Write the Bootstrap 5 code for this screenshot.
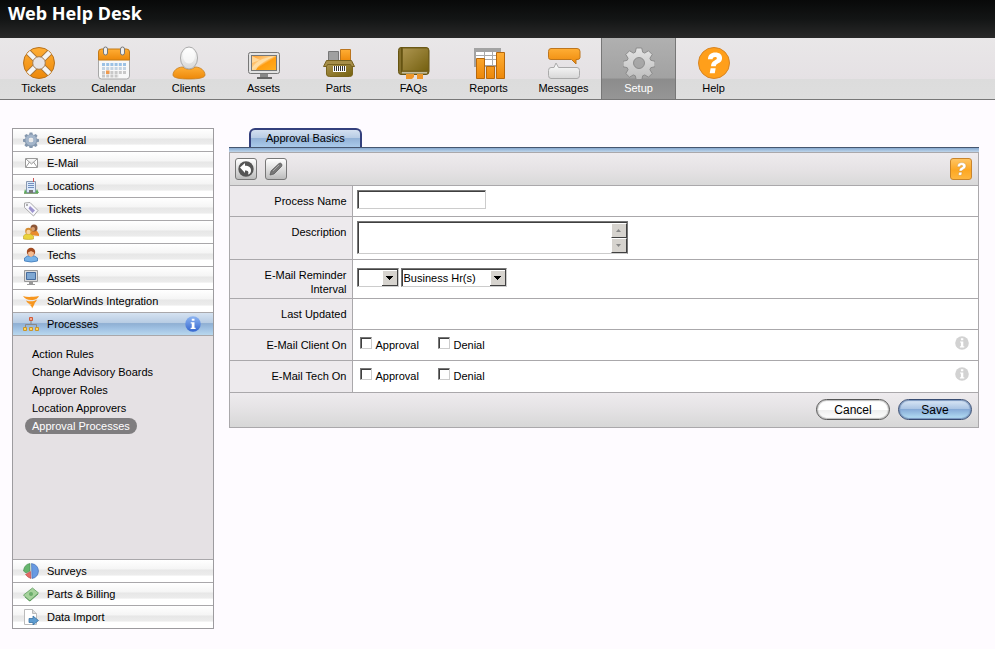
<!DOCTYPE html>
<html lang="en">
<head>
<meta charset="utf-8">
<meta name="viewport" content="width=device-width, initial-scale=1">
<title>Web Help Desk</title>
<link href="https://cdn.jsdelivr.net/npm/bootstrap@5.3.0/dist/css/bootstrap.min.css" rel="stylesheet">
<style>
body{font:11px/14px "Liberation Sans",Arial,sans-serif;color:#000;background:#fefbff}
a{color:inherit;text-decoration:none}
.masthead{height:38px;padding:0 8px;background:linear-gradient(#080909,#131515 50%,#292929)}
.masthead h1{font:bold 18px/27px "Noto Sans","Open Sans",sans-serif;color:#fff}
.topnav{height:62px;padding-left:1px;border-bottom:1px solid #777;background:linear-gradient(#e9e7e8,#e5e1e4 68%,#dcdcdc 68%,#dedede)}
.topnav a{width:75px;height:61px;padding-top:8px;line-height:16px}
.topnav svg{width:34px;height:34px}
.topnav a.active{color:#fff;background:linear-gradient(#b0b0b0,#a2a2a2 65%,#8c8c8c 68%,#969696);border:solid #777;border-width:0 1px}
.page-body{padding:28px 16px 20px 12px;gap:15px}
.sidebar{width:202px;border:1px solid #9d9b9f}
.menu-row{height:23px;padding-left:10px;padding-right:12px;gap:8px;border-bottom:1px solid #a9a7aa;background:linear-gradient(#fff,#f5f5f5 40%,#e7e7e7 46%,#ececec 68%,#fff 74%,#fff)}
.menu-row svg{width:16px;height:16px}
.menu-row.active{background:linear-gradient(#d5e2f1,#b8cce3 44%,#8fafd3 48%,#9fc0e2 70%,#b9d8ee)}
.menu-row.final{border-bottom:0;height:22px}
.submenu{min-height:224px;padding:9px 12px;background:#e5e1e4;border-bottom:1px solid #a9a7aa}
.submenu a{height:18px;line-height:18px;padding:0 7px}
.submenu a.active{height:16px;line-height:16px;margin-top:1px;border-radius:8px;background:#7f7d7f;color:#fff}
.tab-strip{padding-left:20px;border-bottom:1px solid #46566f}
.tab-strip a{padding:0 15px 1px;line-height:16px;border:solid #34407d;border-width:2px 2px 0;border-radius:6px 6px 0 0;background:linear-gradient(#d3e0f0,#b7cbe4 48%,#93b2d7 50%,#aacaea)}
.blue-line{height:4px;background:linear-gradient(#87a9d0,#c0d6ea)}
.panel{border:1px solid #aaa8ab;background:#fff}
.panel-tools{height:32px;padding:0 6px 0 5px;gap:8px;background:linear-gradient(#eeebee,#e5e2e4 55%,#d9d9d9)}
.tool-btn{width:22px;height:22px;border:1px solid #777;border-radius:3px;background:linear-gradient(#fff,#d8d8d8 60%,#bbb)}
.help-btn{border-color:#c9852c;background:linear-gradient(#ffc564,#fda722 55%,#ffb63e)}
.form-grid th,.form-grid td{border-top:1px solid #aaa8ab;vertical-align:top}
.form-grid th{width:122px;padding:8px 5px 2px 24px;font-weight:400;text-align:right;background:#edeaed;border-right:1px solid #aaa8ab}
.form-grid td{padding:4px}
.form-grid tr{height:31px}
.form-grid tr.tall{height:43px}
.form-grid tr.medium{height:39px}
.form-grid .medium td{padding-top:8px}
.form-grid td.choices{padding:6px 9px 6px 7px}
.sunken{border:1px solid;border-color:#777 #ccc #ccc #777;box-shadow:inset 1px 1px #404040;border-radius:0;background-color:#fff}
.name-box{width:129px;height:19px;padding:2px;outline:0}
.memo{width:271px;height:33px;padding:1px 0 0 2px;border-color:#777 #777 #ccc}
.memo textarea{border:0;outline:0;resize:none;background:transparent;overflow:hidden;min-width:0}
.memo button{width:16px;height:15px;padding:0;border:1px solid;border-color:#fff #404040 #404040 #fff;background:#d6d3ce}
.drops{gap:2px}
.drop{appearance:none;height:19px;padding:0 20px 0 2px;color:#000;background:#fff url("data:image/svg+xml,%3Csvg xmlns='http://www.w3.org/2000/svg' width='16' height='16'%3E%3Cpath fill='%23404040' d='M0 0h16v16H0z'/%3E%3Cpath fill='%23fff' d='M0 0h15v15H0z'/%3E%3Cpath fill='%23d6d3ce' d='M1 1h14v14H1z'/%3E%3Cpath d='M4 6h7v1H10v1H9v1H8v1H7V9H6V8H5V7H4z'/%3E%3C/svg%3E") no-repeat right 0 top 1px}
.drop-count{width:42px}
.drop-unit{width:106px}
.tick{appearance:none;width:12px;height:12px;margin:1px 4px 0 0}
.tick:checked{background:#404040}
.tick-pair{width:78px;line-height:18px}
.info{width:14px;height:14px}
.panel-foot{height:35px;padding:0 6px;gap:8px;border-top:1px solid #aaa8ab;background:linear-gradient(#eeebee,#e4e2e4 50%,#d7d7d7)}
.pill{width:74px;height:21px;padding:0;border:1px solid #555;border-radius:11px;font-size:12px;line-height:18px;background:linear-gradient(#fff,#fff 50%,#eee 52%,#fff);box-shadow:inset 0 0 1px 1px #bbb}
.pill-save{border-color:#394d72;background:linear-gradient(#dbe8f6,#a9c3e3 48%,#87abd7 50%,#b7e2f6);box-shadow:inset 0 0 1px 1px #7894bd}
</style>
<script src="https://cdn.jsdelivr.net/npm/bootstrap@5.3.0/dist/js/bootstrap.bundle.min.js"></script>
</head>
<body>
<svg width="0" height="0" class="d-block" aria-hidden="true">
<defs>
<linearGradient id="or" x2="0" y2="1"><stop stop-color="#ffae35"/><stop offset="1" stop-color="#ed8809"/></linearGradient>
<linearGradient id="gold" x2="1" y2="1"><stop stop-color="#ad9550"/><stop offset="1" stop-color="#74600f"/></linearGradient>
<linearGradient id="wh" x2="0" y2="1"><stop stop-color="#fff"/><stop offset="1" stop-color="#d7d7d7"/></linearGradient>
<linearGradient id="gr" x2="0" y2="1"><stop stop-color="#e4e4e4"/><stop offset="1" stop-color="#bdbdbd"/></linearGradient>
<linearGradient id="bl" x2="0" y2="1"><stop stop-color="#8db5f2"/><stop offset="1" stop-color="#3466cf"/></linearGradient>
<linearGradient id="scr" x2="1" y2="1"><stop stop-color="#ff9a22"/><stop offset=".45" stop-color="#ffd18a"/><stop offset=".55" stop-color="#ff9d10"/><stop offset="1" stop-color="#ffb020"/></linearGradient>
<symbol id="cog" viewBox="0 0 32 32"><path fill-rule="evenodd" d="M13.3 1h5.4l1 4.2 2 .9 3.8-2.3 3.7 3.7-2.3 3.8.9 2 4.2 1v5.4l-4.2 1-.9 2 2.3 3.8-3.7 3.700-3.800-2.300-2 .9-1 4.200h-5.400l-1-4.200-2-.9-3.800 2.300-3.700-3.700 2.300-3.800-.9-2-4.200-1v-5.400l4.200-1 .9-2-2.300-3.800 3.700-3.700 3.800 2.300 2-.9zM16 10.500a5.500 5.500 0 1 0 0 11 5.500 5.500 0 0 0 0-11z"/></symbol>
<symbol id="inf" viewBox="0 0 14 14"><circle cx="7" cy="7" r="6.8"/><path fill="#fff" d="M5.9 2.3h2.4v1.9H5.9zM5 5.4h3.3v4.8h1v1.2H4.9v-1.2h1V6.6H5z"/></symbol>
<symbol id="quest" viewBox="0 0 20 20"><path d="M5.3 7.2C5.500 3.600 7.600 2 11 2c3.300 0 5.200 1.600 5.200 4.100 0 2.300-1.300 3.300-2.900 4.100-1.400.7-1.700 1.200-1.900 2.300H7.700c.1-2.400.9-3.600 2.800-4.500 1.100-.5 1.700-.9 1.700-1.600 0-.6-.5-1-1.400-1-1.100 0-1.700.6-1.900 1.800zM7.400 14h3.900l-.7 3.900H6.700z"/></symbol>
</defs></svg>

<header class="masthead"><h1 class="m-0">Web Help Desk</h1></header>

<nav class="topnav d-flex" aria-label="Main">
<a href="#" class="d-flex flex-column align-items-center"><svg viewBox="0 0 34 34"><circle cx="17" cy="17" r="15.500" fill="url(#or)" stroke="#b9721b"/><g stroke="#a8763a" stroke-width="6.500"><path d="m6.500 6.500 21 21M27.500 6.500l-21 21"/></g><path stroke="#f4f4f4" stroke-width="4.500" d="m6.300 6.300 21.400 21.400M27.700 6.300 6.300 27.700"/><circle cx="17" cy="17" r="6.300" fill="#e6e3e5" stroke="#a37a4a"/></svg>Tickets</a>
<a href="#" class="d-flex flex-column align-items-center"><svg viewBox="0 0 34 34"><rect x="1.500" y="8" width="31" height="25" rx="3" fill="#f8f8f8" stroke="#a7a7a7"/><path fill="url(#or)" stroke="#c27a18" d="M1.500 14V6q0-3 3-3h25q3 0 3 3v8z"/><rect x="6.500" y="1" width="4" height="8" rx="2" fill="#eee" stroke="#777"/><rect x="23.500" y="1" width="4" height="8" rx="2" fill="#eee" stroke="#777"/><g stroke-width="3" stroke-dasharray="3 1.200"><path stroke="#9bc1e5" d="M5 18.500h25"/><path stroke="#c3d3e3" d="M5 22.500h25"/><path stroke="#c8c8c8" d="M5 26.500h25M5 30h17"/></g><path fill="#ef9a4e" d="M9 24.500h3.500V28H9z"/></svg>Calendar</a>
<a href="#" class="d-flex flex-column align-items-center"><svg viewBox="0 0 34 34"><path fill="url(#or)" stroke="#c57d20" stroke-width=".8" d="M1 29c0-4 4-8 10-8 3 3 9 3 12 0 6 0 10 4 10 8 0 3-7 4-16 4S1 32 1 29z"/><ellipse cx="17" cy="12" rx="8.500" ry="11" fill="url(#wh)" stroke="#aaa"/><ellipse cx="17" cy="10" rx="6" ry="7.500" fill="#fff" opacity=".6"/></svg>Clients</a>
<a href="#" class="d-flex flex-column align-items-center"><svg viewBox="0 0 34 34"><rect x="1.500" y="6.500" width="31" height="21" rx="2" fill="#e2e2e2" stroke="#777"/><rect x="4.500" y="9.500" width="25" height="15" fill="url(#scr)" stroke="#777"/><path fill="#ffe2ae" opacity=".75" d="M5 22c5-8 11-10 24-12-11 4-17 8-20 14H5zM5 10l8 4-8 3z"/><path fill="#888" d="M13 28h8v3h-8z"/><path fill="#666" d="M10 31h15v2H10z"/></svg>Assets</a>
<a href="#" class="d-flex flex-column align-items-center"><svg viewBox="0 0 34 34"><path fill="#a0a0a0" stroke="#777" d="M6.500 5.500h10v10h-10z"/><path fill="url(#or)" stroke="#bb751e" d="M18.500 3.500h10v12h-10z"/><path fill="url(#gold)" stroke="#7a651e" d="M4.500 17h26v11q0 2.500-3 2.500h-20q-3 0-3-2.500z"/><path fill="#a68e49" stroke="#766121" d="M4.500 14.500h25l3 6h-3l-1-2h-23l-1 2h-3z"/><path fill="#fff" d="M11 20h13v6H11z"/><path stroke="#333" stroke-dasharray="1 1" stroke-width="5" d="M12 22.500h11"/></svg>Parts</a>
<a href="#" class="d-flex flex-column align-items-center"><svg viewBox="0 0 34 34"><path fill="#84702c" stroke="#665411" d="M4 1.500h25q3 0 3 3v21q0 3-3 3H4q-2.500 0-2.500-3v-21q0-3 2.500-3z"/><path fill="#c4bc9e" d="M5 26h25v1.500H5z"/><path fill="url(#gold)" stroke="#715e1c" d="M5.500 2h24q2 0 2 2v21h-26z"/><path stroke="#665411" d="M4.500 2v24"/><path fill="#ed962a" d="M9 28h4v5H9zm4 0h4v3l-2 2h-2zm7 0h6v5h-6z"/></svg>FAQs</a>
<a href="#" class="d-flex flex-column align-items-center"><svg viewBox="0 0 34 34"><path fill="#fff" stroke="#a3a3a3" stroke-width="2" d="M3 3h25v17H3z"/><path fill="#a3a3a3" d="M2 2h27v4H2z"/><path stroke="#aaa" d="M4 9.500h23M4 13.500h23M12.500 6v14M20.500 6v14"/><g fill="url(#or)" stroke="#b7680c"><path d="M4.500 12.500h8v20h-8zM14.500 20.500h8v12h-8zM24.500 6.500h8v26h-8z"/></g></svg>Reports</a>
<a href="#" class="d-flex flex-column align-items-center"><svg viewBox="0 0 34 34"><path fill="url(#or)" stroke="#bd761e" d="M4 2.500h26q3 0 3 3v6q0 2-3 2h-1v4.500l-4.500-4.500H4q-2.500 0-2.500-2v-6q0-3 2.500-3z"/><path fill="url(#wh)" stroke="#aaa" d="M4 21.500h3l2-4.500 2.500 4.500H30q2.500 0 2.500 3v5q0 3-2.500 3H4q-2.500 0-2.500-3v-5q0-3 2.500-3z"/></svg>Messages</a>
<a href="#" class="active d-flex flex-column align-items-center" aria-current="page"><svg viewBox="0 0 34 34" fill="url(#gr)" stroke="#808080" stroke-width=".8"><use href="#cog" x="1" y="1" width="32" height="32"/></svg>Setup</a>
<a href="#" class="d-flex flex-column align-items-center"><svg viewBox="0 0 34 34"><circle cx="17" cy="17" r="15.500" fill="#ff9f1a" stroke="#d78524"/><use href="#quest" fill="#fff" x="4" y="4" width="26" height="26"/></svg>Help</a>
</nav>

<div class="page-body d-flex align-items-start">
<nav class="sidebar flex-shrink-0" aria-label="Setup">
<a href="#" class="menu-row d-flex align-items-center"><svg><use href="#cog" fill="#8497ad"/><circle cx="8" cy="8" r="4" fill="none" stroke="#a3b5ca" stroke-width="3"/></svg>General</a>
<a href="#" class="menu-row d-flex align-items-center"><svg viewBox="0 0 16 16"><path fill="#fff" stroke="#999" d="M2.500 3.500h12v9h-12zM3 4l5.500 5L14 4M3 12l3.500-5m7.500 5-3.500-5"/></svg>E-Mail</a>
<a href="#" class="menu-row d-flex align-items-center"><svg viewBox="0 0 16 16"><path fill="#dce9fa" stroke="#8898b0" d="M3.500 3.500h9v11h-9z"/><path stroke="#7291c0" d="M5 5.500h6M5 7.500h6M5 9.500h6"/><path fill="#5cab5c" d="m1 15 1-4 2 4zm11 0 2-4 2 4z"/><path fill="#777" d="M6 12h4v3H6z"/><path stroke="#c55" d="M10.500 0v4"/><path stroke="#84a67b" d="M1 15.500h14"/></svg>Locations</a>
<a href="#" class="menu-row d-flex align-items-center"><svg viewBox="0 0 16 16"><path fill="#f8f8fd" stroke="#aaa" d="M1.500 2 7 1.500l8 8L10.500 15l-9-8.500z"/><path fill="#9c93cd" d="m7 5 5 4.500L9.500 12l-4-4.500z"/><circle cx="4" cy="4" r="1" fill="#999"/></svg>Tickets</a>
<a href="#" class="menu-row d-flex align-items-center"><svg viewBox="0 0 16 16"><path fill="#e98b2d" d="M7 11V9l2-2h5l2 3v2z"/><circle cx="11" cy="4" r="3.500" fill="#8c5738"/><circle cx="10" cy="5" r="2" fill="#dba070"/><path fill="#ead33c" stroke="#bca028" stroke-width=".6" d="M.5 15v-3l2-2h5l3 2v3q-5 1-10 0z"/><circle cx="5.500" cy="7" r="3.300" fill="#d58c32"/><circle cx="5.500" cy="8" r="2.200" fill="#f9d39c"/></svg>Clients</a>
<a href="#" class="menu-row d-flex align-items-center"><svg viewBox="0 0 16 16"><path fill="#76b2e9" stroke="#3c76b5" stroke-width=".8" d="M1.500 14v-3l3-2h7l3 2v3q-6 2-13 0z"/><circle cx="8" cy="5" r="4.200" fill="#a34b20"/><path fill="#f4bb91" d="M5 5.500 8 4l3 1.500q0 4-3 4.500-3-.5-3-4.500z"/></svg>Techs</a>
<a href="#" class="menu-row d-flex align-items-center"><svg viewBox="0 0 16 16"><path fill="#ddd" stroke="#999" d="M1.500.5h13v11h-13z"/><path fill="#7fa8d3" stroke="#476c9d" d="M3.500 2.500h9v7h-9z"/><path fill="#999" d="M6 12h4v2h2v1H4v-1h2z"/></svg>Assets</a>
<a href="#" class="menu-row d-flex align-items-center"><svg viewBox="0 0 16 16"><path fill="#f7961e" d="M0 3c4 1.500 9 1 16 0-1 2.500-3 3.500-6 4C5 7.500 2 6 0 3zm3 4.500c4 1.500 8 1 11-1-1 3.500-4 5-7 4.500-2-.5-3-1.500-4-3.500zm3 4c2 0 4-.5 6-2-1 3-2 4-3 6 0-2-1-3-3-4z"/></svg>SolarWinds Integration</a>
<a href="#" class="menu-row active d-flex align-items-center"><svg viewBox="0 0 16 16"><path fill="none" stroke="#888" d="M8 5v3.500M2.500 11V8.500h11V11"/><path fill="#f4a78b" stroke="#cd5c3c" d="M6.500 1.500h3v3h-3z"/><path fill="#ffd45c" stroke="#ca962b" d="M.5 11.500h3v3h-3zm6 0h3v3h-3zm6 0h3v3h-3z"/></svg><span class="flex-grow-1">Processes</span><svg fill="url(#bl)" class="info"><use href="#inf"/></svg></a>
<div class="submenu d-flex flex-column align-items-start">
<a href="#">Action Rules</a><a href="#">Change Advisory Boards</a><a href="#">Approver Roles</a><a href="#">Location Approvers</a><a href="#" class="active" aria-current="page">Approval Processes</a>
</div>
<a href="#" class="menu-row d-flex align-items-center"><svg viewBox="0 0 16 16"><path fill="#66b56d" stroke="#438b4b" stroke-width=".6" d="M7 8V.5Q1 1.500.5 8L3 10z"/><path fill="#e36b65" stroke="#b64743" stroke-width=".6" d="m7.500 8.500-5 3q2 3 5.500 4z"/><path fill="#689ae2" stroke="#3b67ad" stroke-width=".6" d="M8.500.5q6.500 1 7 7.500-.5 6.500-6.500 7.500z"/></svg>Surveys</a>
<a href="#" class="menu-row d-flex align-items-center"><svg viewBox="0 0 16 16"><path fill="#a6d29c" stroke="#5f9e60" stroke-width=".8" d="m.5 9 9-7 6 5-9 8z"/><path fill="none" stroke="#5f9e60" d="m2 11 5 4 8-7"/><circle cx="8" cy="8" r="2" fill="#6bad6b"/></svg>Parts &amp; Billing</a>
<a href="#" class="menu-row final d-flex align-items-center"><svg viewBox="0 0 16 16"><path fill="#fff" stroke="#bbb" d="M1.500.5h8l4 4v11h-12z"/><path fill="#ddd" stroke="#bbb" d="M9.500.5v4h4"/><path fill="#5e9cd0" stroke="#3872a3" stroke-width=".8" d="M6 9.500h4V7l5.500 4.500L10 16v-2.500H6z"/></svg>Data Import</a>
</nav>

<main class="flex-grow-1">
<div class="tab-strip d-flex"><a href="#" aria-current="page">Approval Basics</a></div>
<div class="blue-line"></div>
<form class="panel">
<div class="panel-tools d-flex align-items-center">
<button type="button" class="tool-btn p-0 d-flex" aria-label="Back"><svg viewBox="0 0 20 20" width="20" height="20"><circle cx="10" cy="10" r="7.700" fill="#555"/><path fill="#fff" d="m4 8.500 5-4.500v2.700c4 0 6 2 6 4.800 0 2-1 3.500-3 4 1.200-2.500 0-4-3-4V14z"/></svg></button>
<button type="button" class="tool-btn p-0 d-flex me-auto" aria-label="Edit"><svg viewBox="0 0 20 20" width="20" height="20"><path fill="#777" stroke="#555" stroke-width=".7" d="m4 16 1-4 8-7.500q1.500-1 2.500.3t0 2.700L8 15z"/><path stroke="#aaa" d="m7 12 6-6"/></svg></button>
<button type="button" class="tool-btn help-btn p-0 d-flex" aria-label="Help"><svg viewBox="0 0 20 20" width="20" height="20" fill="#fff" stroke="#b97b26" stroke-width=".4"><use href="#quest" x="2" y="2" width="16" height="16"/></svg></button>
</div>
<table class="form-grid w-100">
<tr><th scope="row"><label for="pname">Process Name</label></th><td><input id="pname" type="text" class="sunken name-box d-block" autofocus></td></tr>
<tr class="tall"><th scope="row"><label for="descr">Description</label></th><td><div class="sunken memo d-flex"><textarea id="descr" class="flex-grow-1 p-0"></textarea><div class="d-flex flex-column"><button type="button" class="d-flex align-items-center justify-content-center" aria-label="Scroll up"><svg width="5" height="3"><path fill="#888" d="M0 3h5L2.500 0z"/></svg></button><button type="button" class="d-flex align-items-center justify-content-center" aria-label="Scroll down"><svg width="5" height="3"><path fill="#888" d="M0 0h5L2.500 3z"/></svg></button></div></div></td></tr>
<tr class="medium"><th scope="row"><label for="count">E-Mail Reminder Interval</label></th><td><div class="d-flex drops"><select id="count" class="sunken drop drop-count"><option></option><option>1</option><option>2</option></select><select class="sunken drop drop-unit" aria-label="Interval unit"><option>Business Hr(s)</option></select></div></td></tr>
<tr><th scope="row">Last Updated</th><td></td></tr>
<tr><th scope="row">E-Mail Client On</th><td class="choices"><div class="d-flex"><div class="tick-pair d-flex"><input type="checkbox" class="sunken tick" id="ca"><label for="ca">Approval</label></div><div class="tick-pair d-flex me-auto"><input type="checkbox" class="sunken tick" id="cd"><label for="cd">Denial</label></div><svg class="info" fill="#d2d2d2"><use href="#inf"/></svg></div></td></tr>
<tr><th scope="row">E-Mail Tech On</th><td class="choices"><div class="d-flex"><div class="tick-pair d-flex"><input type="checkbox" class="sunken tick" id="ta"><label for="ta">Approval</label></div><div class="tick-pair d-flex me-auto"><input type="checkbox" class="sunken tick" id="td"><label for="td">Denial</label></div><svg class="info" fill="#d2d2d2"><use href="#inf"/></svg></div></td></tr>
</table>
<div class="panel-foot d-flex align-items-center justify-content-end"><button type="button" class="pill">Cancel</button><button type="submit" class="pill pill-save">Save</button></div>
</form>
</main>
</div>
</body>
</html>
